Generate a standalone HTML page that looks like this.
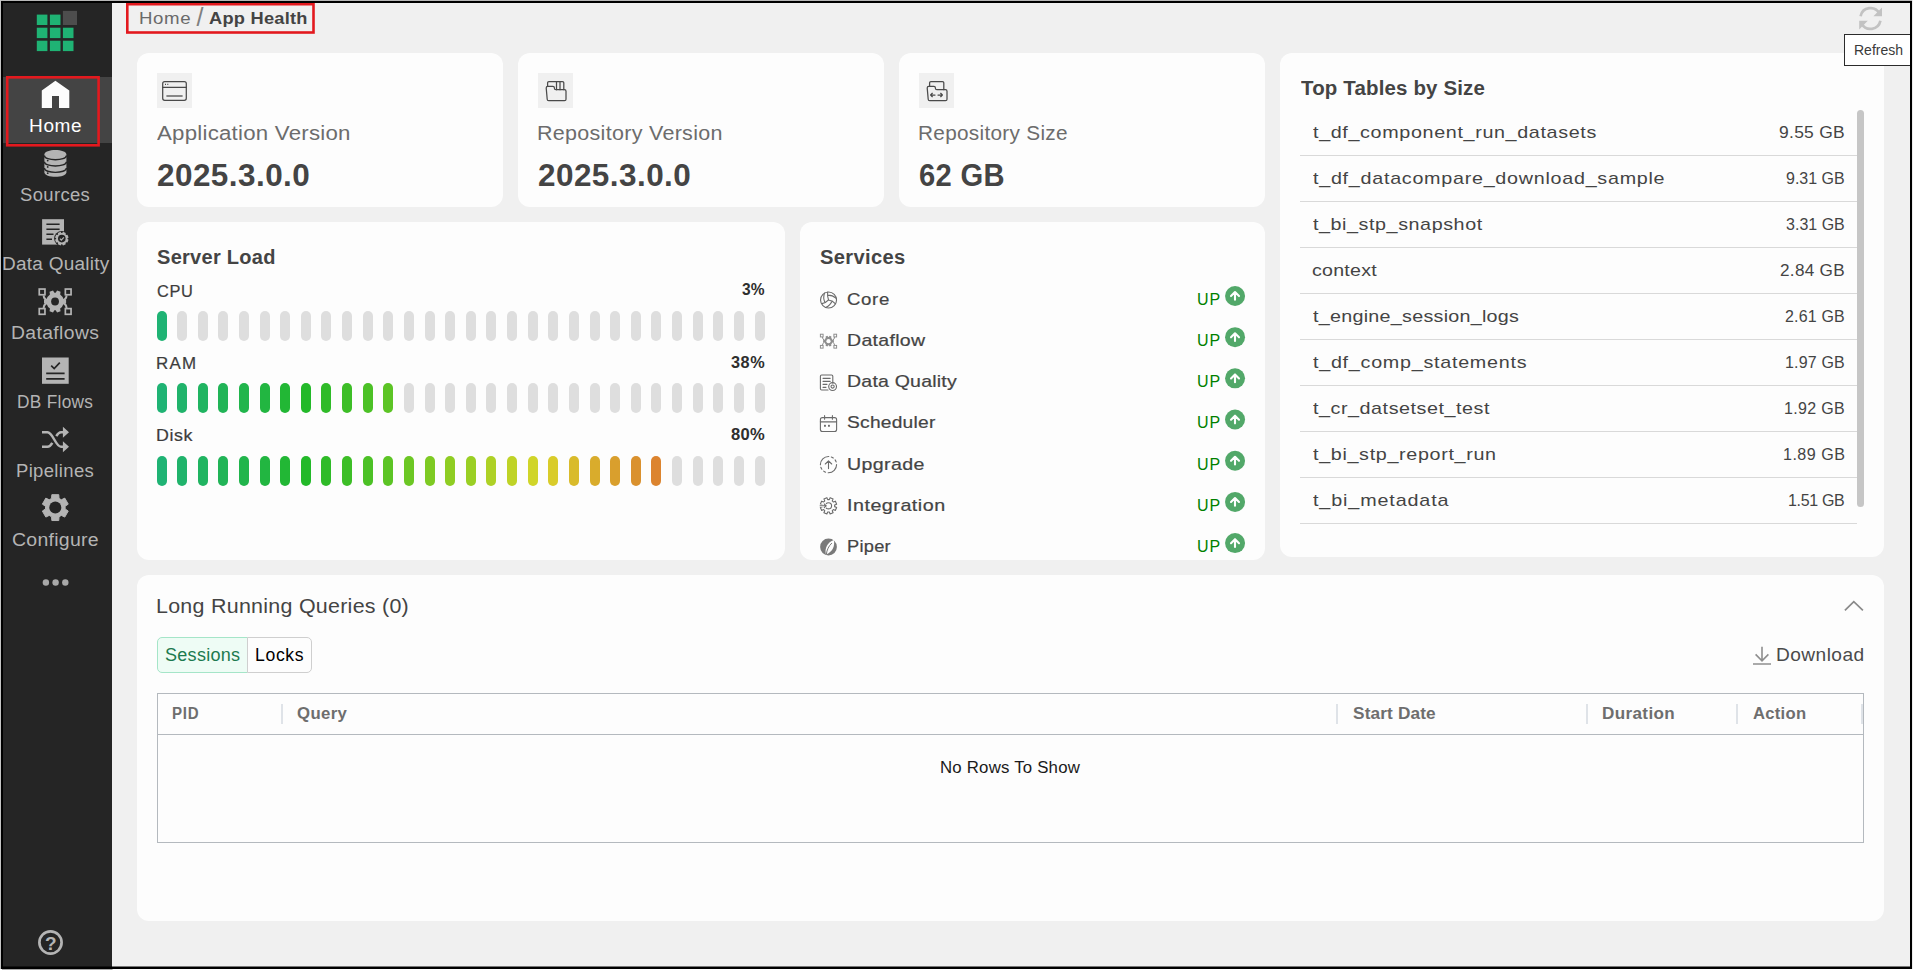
<!DOCTYPE html>
<html lang="en">
<head>
<meta charset="utf-8">
<title>App Health</title>
<style>
*{box-sizing:border-box;margin:0;padding:0}
html,body{width:1913px;height:970px;overflow:hidden;background:#f0f0f0}
body{font-family:"Liberation Sans",sans-serif;color:#444;position:relative}
.abs{position:absolute}
.t{position:absolute;white-space:nowrap}
#side{left:3px;top:3px;width:109px;height:964px;background:#252525}
#side-act{left:3px;top:77px;width:109px;height:66px;background:#444}
.card{position:absolute;background:#fdfdfd;border-radius:12px}
.ibox{position:absolute;width:35px;height:35px;background:#f0f0f0}
.bar{position:absolute;width:10px;height:30px;border-radius:5px;background:#dedede}
.hl{position:absolute;height:1px;background:#d9d9d9}
.vs{position:absolute;width:2px;height:20px;top:704px;background:#dfe3e8}
#frame-t{left:0;top:0;width:1913px;height:1px;background:#b8b8b8}
#frame-l{left:0;top:0;width:1px;height:970px;background:#c4c4c4}
#frame-r{left:1912px;top:0;width:1px;height:970px;background:#ececec}
#frame-b{left:0;top:969px;width:1913px;height:1px;background:linear-gradient(90deg,#fff 0,#fff 2px,#a8a8a8 2px,#a8a8a8 112px,#fff 113px)}
#bk-t{left:1px;top:1px;width:1911px;height:2px;background:#000}
#bk-l{left:1px;top:1px;width:2px;height:968px;background:#000}
#bk-r{left:1910px;top:1px;width:2px;height:968px;background:#000}
#bk-b{left:1px;top:967px;width:1911px;height:2px;background:#000}
#bk-b2{left:3px;top:966px;width:1907px;height:1px;background:rgba(0,0,0,.5)}
</style>
</head>
<body>
<div id="side" class="abs"></div>
<div id="side-act" class="abs"></div>
<svg class="abs" id="sideicons" style="left:0;top:0" width="113" height="970" viewBox="0 0 113 970">
<!-- logo -->
<g fill="#1fb374">
<rect x="36.8" y="14.6" width="10.6" height="10.4"/>
<rect x="49.9" y="14.6" width="10.6" height="10.4"/>
<rect x="36.8" y="27.7" width="10.6" height="10.4"/>
<rect x="49.9" y="27.7" width="10.6" height="10.4"/>
<rect x="62.9" y="27.7" width="10.6" height="10.4"/>
<rect x="36.8" y="40.7" width="10.6" height="10.4"/>
<rect x="49.9" y="40.7" width="10.6" height="10.4"/>
<rect x="62.9" y="40.7" width="10.6" height="10.4"/>
</g>
<rect x="62.9" y="10.9" width="14.1" height="14.1" fill="#4d4d4d"/>
<!-- home -->
<path d="M41.8 108V90.4L55.4 80.8L69.3 90.4V108H59V96.1H52V108Z" fill="#fcfcfc"/>
<rect x="7.2" y="77.3" width="91.4" height="68" fill="none" stroke="#e3191e" stroke-width="2.6"/>
<!-- sources -->
<path d="M44.4 154.6c0-6.2 22-6.2 22 0v17.6c0 6.2-22 6.2-22 0Z" fill="#b4b4b4"/>
<g fill="none" stroke="#252525" stroke-width="1.4"><path d="M44.4 155.4c0 5.8 22 5.8 22 0"/><path d="M44.4 161.7c0 5.8 22 5.8 22 0"/><path d="M44.4 168c0 5.8 22 5.8 22 0"/></g>
<g fill="#252525"><circle cx="47.7" cy="160.6" r="0.9"/><circle cx="47.7" cy="166.9" r="0.9"/><circle cx="47.7" cy="173.2" r="0.9"/></g>
<!-- data quality -->
<rect x="42.1" y="219.2" width="21.9" height="25.4" fill="#b4b4b4"/>
<g stroke="#252525" stroke-width="1.5"><path d="M46.4 224.2H59.6M46.4 229.2H59.6M46.4 234.2H53.5M46.4 239.2H52"/></g>
<circle cx="61.8" cy="238.6" r="7.7" fill="#252525"/>
<path d="M67.48 239.05 L68.59 239.81 L67.46 242.55 L66.13 242.30 L65.50 242.93 L65.75 244.26 L63.01 245.39 L62.25 244.28 L61.35 244.28 L60.59 245.39 L57.85 244.26 L58.10 242.93 L57.47 242.30 L56.14 242.55 L55.01 239.81 L56.12 239.05 L56.12 238.15 L55.01 237.39 L56.14 234.65 L57.47 234.90 L58.10 234.27 L57.85 232.94 L60.59 231.81 L61.35 232.92 L62.25 232.92 L63.01 231.81 L65.75 232.94 L65.50 234.27 L66.13 234.90 L67.46 234.65 L68.59 237.39 L67.48 238.15Z" fill="#b4b4b4"/>
<circle cx="61.8" cy="238.6" r="3.8" fill="#252525"/>
<path d="M59.9 238.7l1.4 1.4 2.6-2.8" fill="none" stroke="#b4b4b4" stroke-width="1.2"/>
<!-- dataflows -->
<g fill="none" stroke="#b4b4b4" stroke-width="1.7">
<rect x="39.25" y="289.05" width="5.7" height="5.7"/>
<rect x="39.25" y="308.60" width="5.7" height="5.7"/>
<rect x="65.35" y="289.05" width="5.7" height="5.7"/>
<rect x="65.35" y="308.60" width="5.7" height="5.7"/>
<path d="M43.6 295.4C43.8 298 45 299.6 47.5 300.2M43.6 308.2C43.8 305.4 45 303.6 47.5 303M66.6 295.4C66.4 298 65.2 299.6 62.7 300.2M66.6 308.2C66.4 305.4 65.2 303.6 62.7 303" stroke-width="2"/>
</g>
<path d="M63.41 299.10 L66.10 299.65 L66.10 303.35 L63.41 303.90 A8.70 8.70 0 0 1 60.16 308.54 L60.57 311.25 L57.09 312.51 L55.66 310.18 A8.70 8.70 0 0 1 54.44 310.18 L53.01 312.51 L49.53 311.25 L49.94 308.54 A8.70 8.70 0 0 1 46.69 303.90 L44.00 303.35 L44.00 299.65 L46.69 299.10 A8.70 8.70 0 0 1 49.94 294.46 L49.53 291.75 L53.01 290.49 L54.44 292.82 A8.70 8.70 0 0 1 55.66 292.82 L57.09 290.49 L60.57 291.75 L60.16 294.46 A8.70 8.70 0 0 1 63.41 299.10 Z" fill="#b4b4b4"/>
<circle cx="55.05" cy="301.5" r="3.9" fill="#252525"/>
<!-- db flows -->
<rect x="42" y="357.5" width="26.7" height="26.3" fill="#b4b4b4"/>
<g fill="none" stroke="#252525" stroke-width="1.7"><path d="M51.2 365.6l3 2.9 5.6-5.9M46.2 373.4H64.6M46.2 378.9H64.6"/></g>
<!-- pipelines -->
<g fill="none" stroke="#b4b4b4" stroke-width="2.5">
<path d="M42 432.3H47.5C53 432.3 55.5 446.7 61 446.7H64"/>
<path d="M42 446.7H47.5C49.5 446.7 51 445 52.3 442.8M56.3 436.2C57.6 434 59 432.3 61 432.3H64"/>
</g>
<path d="M62.9 426.8L69 432.3L62.9 437.8ZM62.9 441.2L69 446.7L62.9 452.2Z" fill="#b4b4b4"/>
<!-- configure -->
<path d="M59.04 516.77 L58.77 520.54 L51.83 520.54 L51.56 516.77 L49.23 515.42 L45.82 517.08 L42.36 511.07 L45.49 508.94 L45.49 506.26 L42.36 504.13 L45.82 498.12 L49.23 499.78 L51.56 498.43 L51.83 494.66 L58.77 494.66 L59.04 498.43 L61.37 499.78 L64.78 498.12 L68.24 504.13 L65.11 506.26 L65.11 508.94 L68.24 511.07 L64.78 517.08 L61.37 515.42Z" fill="#b4b4b4" stroke="#b4b4b4" stroke-width="1" stroke-linejoin="round"/>
<circle cx="55.3" cy="507.6" r="6" fill="#252525"/>
<!-- more -->
<g fill="#a8a8a8"><circle cx="45.9" cy="582.5" r="3.2"/><circle cx="55.6" cy="582.5" r="3.2"/><circle cx="65.3" cy="582.5" r="3.2"/></g>
<!-- help -->
<circle cx="50.5" cy="942.5" r="11.1" fill="none" stroke="#b4b4b4" stroke-width="2.7"/>
</svg>
<!-- cards -->
<div class="card" id="c1" style="left:137px;top:53px;width:366px;height:154px"></div>
<div class="card" id="c2" style="left:518px;top:53px;width:366px;height:154px"></div>
<div class="card" id="c3" style="left:899px;top:53px;width:366px;height:154px"></div>
<div class="card" id="c4" style="left:1280px;top:53px;width:604px;height:504px"></div>
<div class="card" id="c5" style="left:137px;top:222px;width:648px;height:338px"></div>
<div class="card" id="c6" style="left:800px;top:222px;width:465px;height:338px"></div>
<div class="card" id="c7" style="left:137px;top:575px;width:1747px;height:346px"></div>
<div class="ibox" style="left:157px;top:73px"></div>
<div class="ibox" style="left:538px;top:73px"></div>
<div class="ibox" style="left:919px;top:73px"></div>
<!-- top tables -->
<div class="hl" style="left:1300px;top:155px;width:557px"></div>
<div class="hl" style="left:1300px;top:201px;width:557px"></div>
<div class="hl" style="left:1300px;top:247px;width:557px"></div>
<div class="hl" style="left:1300px;top:293px;width:557px"></div>
<div class="hl" style="left:1300px;top:339px;width:557px"></div>
<div class="hl" style="left:1300px;top:385px;width:557px"></div>
<div class="hl" style="left:1300px;top:431px;width:557px"></div>
<div class="hl" style="left:1300px;top:477px;width:557px"></div>
<div class="hl" style="left:1300px;top:523px;width:557px"></div>
<div class="abs" style="left:1857px;top:110px;width:7px;height:397px;border-radius:3.5px;background:#c6c6c6"></div>
<!-- server load bars -->
<div class="bar" style="left:157px;top:311px;background:#1fb374"></div>
<div class="bar" style="left:177px;top:311px"></div>
<div class="bar" style="left:198px;top:311px"></div>
<div class="bar" style="left:218px;top:311px"></div>
<div class="bar" style="left:239px;top:311px"></div>
<div class="bar" style="left:260px;top:311px"></div>
<div class="bar" style="left:280px;top:311px"></div>
<div class="bar" style="left:301px;top:311px"></div>
<div class="bar" style="left:321px;top:311px"></div>
<div class="bar" style="left:342px;top:311px"></div>
<div class="bar" style="left:363px;top:311px"></div>
<div class="bar" style="left:383px;top:311px"></div>
<div class="bar" style="left:404px;top:311px"></div>
<div class="bar" style="left:425px;top:311px"></div>
<div class="bar" style="left:445px;top:311px"></div>
<div class="bar" style="left:466px;top:311px"></div>
<div class="bar" style="left:486px;top:311px"></div>
<div class="bar" style="left:507px;top:311px"></div>
<div class="bar" style="left:528px;top:311px"></div>
<div class="bar" style="left:548px;top:311px"></div>
<div class="bar" style="left:569px;top:311px"></div>
<div class="bar" style="left:590px;top:311px"></div>
<div class="bar" style="left:610px;top:311px"></div>
<div class="bar" style="left:631px;top:311px"></div>
<div class="bar" style="left:651px;top:311px"></div>
<div class="bar" style="left:672px;top:311px"></div>
<div class="bar" style="left:693px;top:311px"></div>
<div class="bar" style="left:713px;top:311px"></div>
<div class="bar" style="left:734px;top:311px"></div>
<div class="bar" style="left:755px;top:311px"></div>
<div class="bar" style="left:157px;top:383px;background:#1fb374"></div>
<div class="bar" style="left:177px;top:383px;background:#20b36b"></div>
<div class="bar" style="left:198px;top:383px;background:#20b461"></div>
<div class="bar" style="left:218px;top:383px;background:#21b457"></div>
<div class="bar" style="left:239px;top:383px;background:#21b54c"></div>
<div class="bar" style="left:260px;top:383px;background:#22b641"></div>
<div class="bar" style="left:280px;top:383px;background:#22b735"></div>
<div class="bar" style="left:301px;top:383px;background:#23b929"></div>
<div class="bar" style="left:321px;top:383px;background:#2fbb28"></div>
<div class="bar" style="left:342px;top:383px;background:#3dbe27"></div>
<div class="bar" style="left:363px;top:383px;background:#4cc126"></div>
<div class="bar" style="left:383px;top:383px;background:#5cc425"></div>
<div class="bar" style="left:404px;top:383px"></div>
<div class="bar" style="left:425px;top:383px"></div>
<div class="bar" style="left:445px;top:383px"></div>
<div class="bar" style="left:466px;top:383px"></div>
<div class="bar" style="left:486px;top:383px"></div>
<div class="bar" style="left:507px;top:383px"></div>
<div class="bar" style="left:528px;top:383px"></div>
<div class="bar" style="left:548px;top:383px"></div>
<div class="bar" style="left:569px;top:383px"></div>
<div class="bar" style="left:590px;top:383px"></div>
<div class="bar" style="left:610px;top:383px"></div>
<div class="bar" style="left:631px;top:383px"></div>
<div class="bar" style="left:651px;top:383px"></div>
<div class="bar" style="left:672px;top:383px"></div>
<div class="bar" style="left:693px;top:383px"></div>
<div class="bar" style="left:713px;top:383px"></div>
<div class="bar" style="left:734px;top:383px"></div>
<div class="bar" style="left:755px;top:383px"></div>
<div class="bar" style="left:157px;top:456px;background:#1fb374"></div>
<div class="bar" style="left:177px;top:456px;background:#20b36b"></div>
<div class="bar" style="left:198px;top:456px;background:#20b461"></div>
<div class="bar" style="left:218px;top:456px;background:#21b457"></div>
<div class="bar" style="left:239px;top:456px;background:#21b54c"></div>
<div class="bar" style="left:260px;top:456px;background:#22b641"></div>
<div class="bar" style="left:280px;top:456px;background:#22b735"></div>
<div class="bar" style="left:301px;top:456px;background:#23b929"></div>
<div class="bar" style="left:321px;top:456px;background:#2fbb28"></div>
<div class="bar" style="left:342px;top:456px;background:#3dbe27"></div>
<div class="bar" style="left:363px;top:456px;background:#4cc126"></div>
<div class="bar" style="left:383px;top:456px;background:#5cc425"></div>
<div class="bar" style="left:404px;top:456px;background:#6cc724"></div>
<div class="bar" style="left:425px;top:456px;background:#7eca23"></div>
<div class="bar" style="left:445px;top:456px;background:#8fcd23"></div>
<div class="bar" style="left:466px;top:456px;background:#9acf24"></div>
<div class="bar" style="left:486px;top:456px;background:#aed126"></div>
<div class="bar" style="left:507px;top:456px;background:#bfd327"></div>
<div class="bar" style="left:528px;top:456px;background:#d0d529"></div>
<div class="bar" style="left:548px;top:456px;background:#d9cc2a"></div>
<div class="bar" style="left:569px;top:456px;background:#d9bb2b"></div>
<div class="bar" style="left:590px;top:456px;background:#d9ac2c"></div>
<div class="bar" style="left:610px;top:456px;background:#d99f2d"></div>
<div class="bar" style="left:631px;top:456px;background:#da912e"></div>
<div class="bar" style="left:651px;top:456px;background:#dc842f"></div>
<div class="bar" style="left:672px;top:456px"></div>
<div class="bar" style="left:693px;top:456px"></div>
<div class="bar" style="left:713px;top:456px"></div>
<div class="bar" style="left:734px;top:456px"></div>
<div class="bar" style="left:755px;top:456px"></div>
<!-- long running queries -->
<div class="abs" style="left:157px;top:637px;width:91px;height:36px;border:1px solid #a5e5c8;border-radius:5px 0 0 5px;background:#eefcf5"></div>
<div class="abs" style="left:247px;top:637px;width:65px;height:36px;border:1px solid #cfcfcf;border-radius:0 5px 5px 0;background:#fdfdfd"></div>
<div class="abs" style="left:157px;top:693px;width:1707px;height:150px;border:1px solid #b4b9be"></div>
<div class="abs" style="left:157px;top:734px;width:1707px;height:1px;background:#b4b9be"></div>
<div class="vs" style="left:281px"></div>
<div class="vs" style="left:1336px"></div>
<div class="vs" style="left:1586px"></div>
<div class="vs" style="left:1736px"></div>
<div class="vs" style="left:1861px"></div>
<svg class="abs" id="mainicons" style="left:0;top:0" width="1913" height="970" viewBox="0 0 1913 970" fill="none">
<rect x="127.3" y="4.2" width="186.2" height="28.3" stroke="#e3191e" stroke-width="2.6"/>
<g stroke="#c2c2c2" stroke-width="2.7"><path d="M1860.6 16.2A10.1 10.1 0 0 1 1879.4 13.4"/><path d="M1880.4 20.8A10.1 10.1 0 0 1 1861.6 23.6"/></g>
<path d="M1882 7.6V16.2H1873.4Z" fill="#c2c2c2"/><path d="M1859.2 29.4V20.8H1867.8Z" fill="#c2c2c2"/>
<rect x="1844.5" y="34.5" width="66" height="31" fill="#fff" stroke="#2b2b2b" stroke-width="1"/>
<g stroke="#4a4a4a" stroke-width="1.25" stroke-linejoin="round" stroke-linecap="round"><rect x="162.7" y="81.5" width="23.6" height="18.8" rx="2"/><path d="M162.7 87.4H186.3"/></g>
<path d="M166.4 96H182.6" stroke="#7a7a7a" stroke-width="1.8"/><path d="M165 84.4h1M167.3 84.4h1" stroke="#4a4a4a" stroke-width="1.2"/>
<g stroke="#4a4a4a" stroke-width="1.25" stroke-linejoin="round" stroke-linecap="round"><path d="M546.2 87.9c0-0.9 0.6-1.5 1.5-1.5h5.2c0.9 0 1.5 0.6 1.5 1.5v0.3c0 0.9 0.6 1.5 1.5 1.5h8.6c0.9 0 1.5 0.6 1.5 1.5v8c0 0.9-0.6 1.5-1.5 1.5h-15.8c-0.9 0-1.5-0.6-1.5-1.5Z"/><path d="M547.6 86.4V82.8c0-0.8 0.5-1.3 1.3-1.3h13.6c0.8 0 1.3 0.5 1.3 1.3V89.7M556.5 81.5V89.7M560 81.5V89.7"/></g>
<g stroke="#4a4a4a" stroke-width="1.25" stroke-linejoin="round" stroke-linecap="round"><path d="M927.2 87.9c0-0.9 0.6-1.5 1.5-1.5h5.2c0.9 0 1.5 0.6 1.5 1.5v0.3c0 0.9 0.6 1.5 1.5 1.5h8.6c0.9 0 1.5 0.6 1.5 1.5v8c0 0.9-0.6 1.5-1.5 1.5h-15.8c-0.9 0-1.5-0.6-1.5-1.5Z"/><path d="M929.6 86.4V82.8c0-0.8 0.5-1.3 1.3-1.3h11.6c0.8 0 1.3 0.5 1.3 1.3V89.7"/><path d="M930.6 95H935M932.3 93.3l-1.7 1.7 1.7 1.7M938 95H942.4M940.7 93.3l1.7 1.7-1.7 1.7"/></g>
<g stroke="#6b6b6b" stroke-width="1.1" stroke-linecap="round" stroke-linejoin="round" transform="translate(828.55 299.95)"><circle cx="0" cy="0" r="8"/><path d="M0 0C-1 -2.5 -1.2 -5.5 -0.9 -8M0 0C2 0.3 5 1.6 7 3.9M0 0C-1.5 1.8 -4 3.2 -6.6 3.7M-4 -7C-5.2 -4 -5 -0.5 -3.6 2.6M-0.9 -4.8C2 -4.8 5.5 -3.6 7.8 -1.6M3.5 1C2.6 3.6 0.2 6 -2.8 7.5"/></g>
<path d="M832.38 339.85 L833.92 340.22 L833.92 342.14 L832.38 342.51 A4.10 4.10 0 0 1 831.19 344.27 L831.41 345.84 L829.64 346.56 L828.71 345.27 A4.10 4.10 0 0 1 828.29 345.27 L827.36 346.56 L825.59 345.84 L825.81 344.27 A4.10 4.10 0 0 1 824.62 342.51 L823.08 342.14 L823.08 340.22 L824.62 339.85 A4.10 4.10 0 0 1 825.81 338.09 L825.59 336.52 L827.36 335.80 L828.29 337.09 A4.10 4.10 0 0 1 828.71 337.09 L829.64 335.80 L831.41 336.52 L831.19 338.09 A4.10 4.10 0 0 1 832.38 339.85 Z" fill="#8e8e8e"/><circle cx="828.5" cy="341.2" r="2.1" fill="#fdfdfd"/>
<g stroke="#8e8e8e" stroke-width="1" fill="none">
<rect x="820.40" y="334.23" width="2.7" height="2.7"/>
<path d="M822.40 336.98Q822.70 339.58 824.30 340.18"/>
<rect x="820.40" y="345.43" width="2.7" height="2.7"/>
<path d="M822.40 345.38Q822.70 342.78 824.30 342.18"/>
<rect x="833.90" y="334.23" width="2.7" height="2.7"/>
<path d="M834.60 336.98Q834.30 339.58 832.70 340.18"/>
<rect x="833.90" y="345.43" width="2.7" height="2.7"/>
<path d="M834.60 345.38Q834.30 342.78 832.70 342.18"/>
</g>
<g stroke="#6b6b6b" stroke-width="1.1" stroke-linecap="round" stroke-linejoin="round" transform="translate(0 0.16)"><path d="M832.8 383V376c0-0.7-0.5-1.2-1.2-1.2h-10c-0.7 0-1.2 0.5-1.2 1.2v12.7c0 0.7 0.5 1.2 1.2 1.2h6.4"/><path d="M823 378.2h7.2M823 381.2h7.2M823 384.2h4M823 387.2h3"/><circle cx="832.6" cy="386.4" r="3.9"/><circle cx="832.6" cy="386.4" r="1.6"/></g>
<g transform="translate(0 0.24)"><g stroke="#6b6b6b" stroke-width="1.1" stroke-linecap="round" stroke-linejoin="round"><rect x="820.4" y="417.4" width="16.2" height="13.8" rx="2"/><path d="M820.4 421.6H836.6M824.6 415.4V419M832.4 415.4V419"/></g><g fill="#6b6b6b"><rect x="824" y="424.6" width="1.9" height="1.9"/><rect x="828" y="424.6" width="1.9" height="1.9"/></g></g>
<g stroke="#6b6b6b" stroke-width="1.1" stroke-linecap="round" stroke-linejoin="round"><circle cx="828.5" cy="464.6" r="8.1" stroke-dasharray="13 2.6 2.2 2.6 2.2 2.6"/><path d="M828.5 468.6V461.0M825.3 464.0l3.2-3.2 3.2 3.2"/></g>
<g stroke="#6b6b6b" stroke-width="1.1" stroke-linecap="round" stroke-linejoin="round"><path d="M834.64 506.63 L836.64 507.42 L835.40 510.41 L833.43 509.56 L832.26 510.73 L833.11 512.70 L830.12 513.94 L829.33 511.94 L827.67 511.94 L826.88 513.94 L823.89 512.70 L824.74 510.73 L823.57 509.56 L821.60 510.41 L820.36 507.42 L822.36 506.63 L822.36 504.97 L820.36 504.18 L821.60 501.19 L823.57 502.04 L824.74 500.87 L823.89 498.90 L826.88 497.66 L827.67 499.66 L829.33 499.66 L830.12 497.66 L833.11 498.90 L832.26 500.87 L833.43 502.04 L835.40 501.19 L836.64 504.18 L834.64 504.97Z"/><circle cx="828.5" cy="505.8" r="3.1"/><path d="M820.1 505.8h6.2M824.3 504.0l1.8 1.8-1.8 1.8" stroke="#fdfdfd" stroke-width="2.6"/><path d="M820.1 505.8h6.2M824.3 504.0l1.8 1.8-1.8 1.8"/></g>
<circle cx="828.5" cy="547.0" r="8.4" fill="#7a7a7a"/><path d="M825.9 554.6c-1.5-6 1.5-12.5 8-14.5c1.2 6.5-1.5 12-8 14.5Z" fill="#fdfdfd"/><path d="M826.3 554.4c0.6-4.6 2.4-8.4 5.6-11.4" stroke="#7a7a7a" stroke-width="1"/>
<circle cx="1235.05" cy="296.00" r="10" fill="#52a869"/><path d="M1235 299.80V292.60M1231 296.10L1235 292.10L1239 296.10" stroke="#fff" stroke-width="2.1" stroke-linecap="round" stroke-linejoin="round"/>
<circle cx="1235.05" cy="337.18" r="10" fill="#52a869"/><path d="M1235 340.98V333.78M1231 337.28L1235 333.28L1239 337.28" stroke="#fff" stroke-width="2.1" stroke-linecap="round" stroke-linejoin="round"/>
<circle cx="1235.05" cy="378.36" r="10" fill="#52a869"/><path d="M1235 382.16V374.96M1231 378.46L1235 374.46L1239 378.46" stroke="#fff" stroke-width="2.1" stroke-linecap="round" stroke-linejoin="round"/>
<circle cx="1235.05" cy="419.54" r="10" fill="#52a869"/><path d="M1235 423.34V416.14M1231 419.64L1235 415.64L1239 419.64" stroke="#fff" stroke-width="2.1" stroke-linecap="round" stroke-linejoin="round"/>
<circle cx="1235.05" cy="460.72" r="10" fill="#52a869"/><path d="M1235 464.52V457.32M1231 460.82L1235 456.82L1239 460.82" stroke="#fff" stroke-width="2.1" stroke-linecap="round" stroke-linejoin="round"/>
<circle cx="1235.05" cy="501.90" r="10" fill="#52a869"/><path d="M1235 505.70V498.50M1231 502.00L1235 498.00L1239 502.00" stroke="#fff" stroke-width="2.1" stroke-linecap="round" stroke-linejoin="round"/>
<circle cx="1235.05" cy="543.08" r="10" fill="#52a869"/><path d="M1235 546.88V539.68M1231 543.18L1235 539.18L1239 543.18" stroke="#fff" stroke-width="2.1" stroke-linecap="round" stroke-linejoin="round"/>
<path d="M1844.9 610.4L1853.8 601.6L1862.9 610.4" stroke="#8a8a8a" stroke-width="1.7"/>
<g stroke="#8e8e8e" stroke-width="1.6"><path d="M1753 664H1771M1762 646.8V661M1755.6 654.4L1762 660.8L1768.4 654.4"/></g>
</svg>

<!-- text -->
<div class="t" id="n-home" style="left:29.00px;top:115px;font-size:18px;line-height:22px;color:#fff;letter-spacing:0.602px;transform:scaleX(1.058);transform-origin:0 0">Home</div>
<div class="t" id="n-src" style="left:20.00px;top:184px;font-size:18px;line-height:22px;color:#b4b4b4;letter-spacing:0.367px;transform:scaleX(1.023);transform-origin:0 0">Sources</div>
<div class="t" id="n-dq" style="left:1.50px;top:253px;font-size:18px;line-height:22px;color:#b4b4b4;letter-spacing:0.230px;transform:scaleX(1.056);transform-origin:0 0">Data Quality</div>
<div class="t" id="n-df" style="left:11.00px;top:322px;font-size:18px;line-height:22px;color:#b4b4b4;letter-spacing:0.358px;transform:scaleX(1.073);transform-origin:0 0">Dataflows</div>
<div class="t" id="n-dbf" style="left:17.00px;top:391px;font-size:18px;line-height:22px;color:#b4b4b4;letter-spacing:0.319px;transform:scaleX(0.959);transform-origin:0 0">DB Flows</div>
<div class="t" id="n-pipe" style="left:16.00px;top:460px;font-size:18px;line-height:22px;color:#b4b4b4;letter-spacing:0.333px;transform:scaleX(1.027);transform-origin:0 0">Pipelines</div>
<div class="t" id="n-conf" style="left:12.00px;top:529px;font-size:18px;line-height:22px;color:#b4b4b4;letter-spacing:0.251px;transform:scaleX(1.082);transform-origin:0 0">Configure</div>
<div class="t" id="helpq" style="left:45.00px;top:932px;font-size:19px;line-height:24px;color:#b4b4b4;letter-spacing:0.000px;font-weight:bold">?</div>
<div class="t" id="bc-home" style="left:139.00px;top:8px;font-size:17px;line-height:21px;color:#6a6a6a;letter-spacing:0.595px;transform:scaleX(1.096);transform-origin:0 0">Home</div>
<div class="t" id="bc-sl" style="left:196.40px;top:2px;font-size:25px;line-height:31px;color:#808080;letter-spacing:0.000px">/</div>
<div class="t" id="bc-app" style="left:209.21px;top:8px;font-size:17px;line-height:21px;color:#444;letter-spacing:0.240px;font-weight:bold;transform:scaleX(1.072);transform-origin:0 0">App Health</div>
<div class="t" id="tip" style="left:1854.00px;top:41px;font-size:14px;line-height:18px;color:#3a3a3a;letter-spacing:-0.002px">Refresh</div>
<div class="t" id="c1-l" style="left:157.00px;top:121px;font-size:20px;line-height:25px;color:#6c6c6c;letter-spacing:0.211px;transform:scaleX(1.112);transform-origin:0 0">Application Version</div>
<div class="t" id="c1-v" style="left:157.00px;top:156px;font-size:31px;line-height:39px;color:#444;letter-spacing:0.429px;font-weight:bold;transform:scaleX(1.016);transform-origin:0 0">2025.3.0.0</div>
<div class="t" id="c2-l" style="left:537.00px;top:121px;font-size:20px;line-height:25px;color:#6c6c6c;letter-spacing:0.272px;transform:scaleX(1.075);transform-origin:0 0">Repository Version</div>
<div class="t" id="c2-v" style="left:538.00px;top:156px;font-size:31px;line-height:39px;color:#444;letter-spacing:0.429px;font-weight:bold;transform:scaleX(1.016);transform-origin:0 0">2025.3.0.0</div>
<div class="t" id="c3-l" style="left:918.00px;top:121px;font-size:20px;line-height:25px;color:#6c6c6c;letter-spacing:0.288px;transform:scaleX(1.038);transform-origin:0 0">Repository Size</div>
<div class="t" id="c3-v" style="left:919.00px;top:156px;font-size:31px;line-height:39px;color:#444;letter-spacing:0.373px;font-weight:bold;transform:scaleX(0.94);transform-origin:0 0">62 GB</div>
<div class="t" id="tt-h" style="left:1301.00px;top:76px;font-size:19.5px;line-height:24px;color:#444;letter-spacing:0.144px;font-weight:bold;transform:scaleX(1.05);transform-origin:0 0">Top Tables by Size</div>
<div class="t" id="tr0-n" style="left:1313.00px;top:122px;font-size:17px;line-height:21px;color:#444;letter-spacing:0.561px;transform:scaleX(1.16);transform-origin:0 0">t_df_component_run_datasets</div>
<div class="t" id="tr0-s" style="left:1779.00px;top:122px;font-size:17px;line-height:21px;color:#444;letter-spacing:0.284px;transform:scaleX(1.026);transform-origin:0 0">9.55 GB</div>
<div class="t" id="tr1-n" style="left:1313.00px;top:168px;font-size:17px;line-height:21px;color:#444;letter-spacing:0.631px;transform:scaleX(1.16);transform-origin:0 0">t_df_datacompare_download_sample</div>
<div class="t" id="tr1-s" style="left:1786.00px;top:168px;font-size:17px;line-height:21px;color:#444;letter-spacing:0.005px;transform:scaleX(0.94);transform-origin:0 0">9.31 GB</div>
<div class="t" id="tr2-n" style="left:1313.00px;top:214px;font-size:17px;line-height:21px;color:#444;letter-spacing:0.490px;transform:scaleX(1.16);transform-origin:0 0">t_bi_stp_snapshot</div>
<div class="t" id="tr2-s" style="left:1786.00px;top:214px;font-size:17px;line-height:21px;color:#444;letter-spacing:0.026px;transform:scaleX(0.94);transform-origin:0 0">3.31 GB</div>
<div class="t" id="tr3-n" style="left:1312.00px;top:260px;font-size:17px;line-height:21px;color:#444;letter-spacing:0.220px;transform:scaleX(1.153);transform-origin:0 0">context</div>
<div class="t" id="tr3-s" style="left:1780.00px;top:260px;font-size:17px;line-height:21px;color:#444;letter-spacing:0.289px;transform:scaleX(1.009);transform-origin:0 0">2.84 GB</div>
<div class="t" id="tr4-n" style="left:1313.00px;top:306px;font-size:17px;line-height:21px;color:#444;letter-spacing:0.229px;transform:scaleX(1.16);transform-origin:0 0">t_engine_session_logs</div>
<div class="t" id="tr4-s" style="left:1785.00px;top:306px;font-size:17px;line-height:21px;color:#444;letter-spacing:0.190px;transform:scaleX(0.94);transform-origin:0 0">2.61 GB</div>
<div class="t" id="tr5-n" style="left:1313.00px;top:352px;font-size:17px;line-height:21px;color:#444;letter-spacing:0.635px;transform:scaleX(1.16);transform-origin:0 0">t_df_comp_statements</div>
<div class="t" id="tr5-s" style="left:1785.00px;top:352px;font-size:17px;line-height:21px;color:#444;letter-spacing:0.183px;transform:scaleX(0.94);transform-origin:0 0">1.97 GB</div>
<div class="t" id="tr6-n" style="left:1313.00px;top:398px;font-size:17px;line-height:21px;color:#444;letter-spacing:0.472px;transform:scaleX(1.16);transform-origin:0 0">t_cr_datsetset_test</div>
<div class="t" id="tr6-s" style="left:1784.00px;top:398px;font-size:17px;line-height:21px;color:#444;letter-spacing:0.350px;transform:scaleX(0.94);transform-origin:0 0">1.92 GB</div>
<div class="t" id="tr7-n" style="left:1313.00px;top:444px;font-size:17px;line-height:21px;color:#444;letter-spacing:0.577px;transform:scaleX(1.16);transform-origin:0 0">t_bi_stp_report_run</div>
<div class="t" id="tr7-s" style="left:1783.00px;top:444px;font-size:17px;line-height:21px;color:#444;letter-spacing:0.508px;transform:scaleX(0.946);transform-origin:0 0">1.89 GB</div>
<div class="t" id="tr8-n" style="left:1313.00px;top:490px;font-size:17px;line-height:21px;color:#444;letter-spacing:0.756px;transform:scaleX(1.16);transform-origin:0 0">t_bi_metadata</div>
<div class="t" id="tr8-s" style="left:1788.00px;top:490px;font-size:17px;line-height:21px;color:#444;letter-spacing:-0.354px;transform:scaleX(0.94);transform-origin:0 0">1.51 GB</div>
<div class="t" id="sl-h" style="left:157.00px;top:245px;font-size:19.5px;line-height:24px;color:#444;letter-spacing:0.278px;font-weight:bold;transform:scaleX(1.026);transform-origin:0 0">Server Load</div>
<div class="t" id="sl-cpu" style="left:157.00px;top:281px;font-size:17px;line-height:21px;color:#3c3c3c;letter-spacing:0.652px;-webkit-text-stroke:0.22px #444;transform:scaleX(0.964);transform-origin:0 0">CPU</div>
<div class="t" id="sl-ram" style="left:156.00px;top:353px;font-size:17px;line-height:21px;color:#3c3c3c;letter-spacing:1.315px;-webkit-text-stroke:0.22px #444;transform:scaleX(0.994);transform-origin:0 0">RAM</div>
<div class="t" id="sl-disk" style="left:156.00px;top:425px;font-size:17px;line-height:21px;color:#3c3c3c;letter-spacing:0.518px;-webkit-text-stroke:0.22px #444;transform:scaleX(1.049);transform-origin:0 0">Disk</div>
<div class="t" id="sl-cpu-p" style="left:742.00px;top:279px;font-size:16.5px;line-height:21px;color:#2e2e2e;letter-spacing:0.229px;font-weight:bold;transform:scaleX(0.94);transform-origin:0 0">3%</div>
<div class="t" id="sl-ram-p" style="left:731.00px;top:352px;font-size:16.5px;line-height:21px;color:#2e2e2e;letter-spacing:0.576px;font-weight:bold;transform:scaleX(0.985);transform-origin:0 0">38%</div>
<div class="t" id="sl-disk-p" style="left:731.00px;top:424px;font-size:16.5px;line-height:21px;color:#2e2e2e;letter-spacing:0.291px;font-weight:bold;transform:scaleX(1.003);transform-origin:0 0">80%</div>
<div class="t" id="sv-h" style="left:820.00px;top:245px;font-size:19.5px;line-height:24px;color:#444;letter-spacing:0.330px;font-weight:bold;transform:scaleX(1.032);transform-origin:0 0">Services</div>
<div class="t" id="sv0-n" style="left:847.00px;top:289px;font-size:17px;line-height:21px;color:#444;letter-spacing:0.585px;-webkit-text-stroke:0.22px #444;transform:scaleX(1.097);transform-origin:0 0">Core</div>
<div class="t" id="sv0-u" style="left:1197.00px;top:290px;font-size:16px;line-height:20px;color:#008000;letter-spacing:0.909px">UP</div>
<div class="t" id="sv1-n" style="left:847.00px;top:330px;font-size:17px;line-height:21px;color:#444;letter-spacing:0.262px;-webkit-text-stroke:0.22px #444;transform:scaleX(1.148);transform-origin:0 0">Dataflow</div>
<div class="t" id="sv1-u" style="left:1197.00px;top:331px;font-size:16px;line-height:20px;color:#008000;letter-spacing:0.909px">UP</div>
<div class="t" id="sv2-n" style="left:847.00px;top:371px;font-size:17px;line-height:21px;color:#444;letter-spacing:0.187px;-webkit-text-stroke:0.22px #444;transform:scaleX(1.148);transform-origin:0 0">Data Quality</div>
<div class="t" id="sv2-u" style="left:1197.00px;top:372px;font-size:16px;line-height:20px;color:#008000;letter-spacing:0.909px">UP</div>
<div class="t" id="sv3-n" style="left:847.00px;top:412px;font-size:17px;line-height:21px;color:#444;letter-spacing:0.222px;-webkit-text-stroke:0.22px #444;transform:scaleX(1.128);transform-origin:0 0">Scheduler</div>
<div class="t" id="sv3-u" style="left:1197.00px;top:413px;font-size:16px;line-height:20px;color:#008000;letter-spacing:0.909px">UP</div>
<div class="t" id="sv4-n" style="left:847.00px;top:454px;font-size:17px;line-height:21px;color:#444;letter-spacing:0.349px;-webkit-text-stroke:0.22px #444;transform:scaleX(1.151);transform-origin:0 0">Upgrade</div>
<div class="t" id="sv4-u" style="left:1197.00px;top:455px;font-size:16px;line-height:20px;color:#008000;letter-spacing:0.909px">UP</div>
<div class="t" id="sv5-n" style="left:847.00px;top:495px;font-size:17px;line-height:21px;color:#444;letter-spacing:0.427px;-webkit-text-stroke:0.22px #444;transform:scaleX(1.16);transform-origin:0 0">Integration</div>
<div class="t" id="sv5-u" style="left:1197.00px;top:496px;font-size:16px;line-height:20px;color:#008000;letter-spacing:0.909px">UP</div>
<div class="t" id="sv6-n" style="left:847.00px;top:536px;font-size:17px;line-height:21px;color:#444;letter-spacing:0.248px;-webkit-text-stroke:0.22px #444;transform:scaleX(1.074);transform-origin:0 0">Piper</div>
<div class="t" id="sv6-u" style="left:1197.00px;top:537px;font-size:16px;line-height:20px;color:#008000;letter-spacing:0.909px">UP</div>
<div class="t" id="lq-h" style="left:156.00px;top:594px;font-size:20px;line-height:25px;color:#444;letter-spacing:0.255px;transform:scaleX(1.071);transform-origin:0 0">Long Running Queries (0)</div>
<div class="t" id="tab-s" style="left:165.00px;top:644px;font-size:17.5px;line-height:22px;color:#1c7a4f;letter-spacing:0.274px;transform:scaleX(1.03);transform-origin:0 0">Sessions</div>
<div class="t" id="tab-l" style="left:255.00px;top:644px;font-size:17.5px;line-height:22px;color:#000;letter-spacing:0.662px;transform:scaleX(1.005);transform-origin:0 0">Locks</div>
<div class="t" id="dl" style="left:1776.00px;top:644px;font-size:17.5px;line-height:22px;color:#4a4a4a;letter-spacing:0.403px;transform:scaleX(1.093);transform-origin:0 0">Download</div>
<div class="t" id="th-pid" style="left:172.00px;top:704px;font-size:16px;line-height:20px;color:#6e6e6e;letter-spacing:0.757px;font-weight:bold;transform:scaleX(0.94);transform-origin:0 0">PID</div>
<div class="t" id="th-q" style="left:297.00px;top:704px;font-size:16px;line-height:20px;color:#6e6e6e;letter-spacing:0.368px;font-weight:bold;transform:scaleX(1.046);transform-origin:0 0">Query</div>
<div class="t" id="th-sd" style="left:1353.00px;top:704px;font-size:16px;line-height:20px;color:#6e6e6e;letter-spacing:0.143px;font-weight:bold;transform:scaleX(1.075);transform-origin:0 0">Start Date</div>
<div class="t" id="th-du" style="left:1602.00px;top:704px;font-size:16px;line-height:20px;color:#6e6e6e;letter-spacing:0.353px;font-weight:bold;transform:scaleX(1.066);transform-origin:0 0">Duration</div>
<div class="t" id="th-ac" style="left:1753.00px;top:704px;font-size:16px;line-height:20px;color:#6e6e6e;letter-spacing:0.254px;font-weight:bold;transform:scaleX(1.039);transform-origin:0 0">Action</div>
<div class="t" id="norows" style="left:940.00px;top:758px;font-size:16px;line-height:20px;color:#1a1a1a;letter-spacing:0.195px;transform:scaleX(1.05);transform-origin:0 0">No Rows To Show</div>
<!-- window frame -->
<div id="frame-t" class="abs"></div><div id="frame-l" class="abs"></div><div id="frame-r" class="abs"></div><div id="frame-b" class="abs"></div>
<div id="bk-t" class="abs"></div><div id="bk-l" class="abs"></div><div id="bk-r" class="abs"></div><div id="bk-b" class="abs"></div><div id="bk-b2" class="abs"></div>
</body>
</html>
